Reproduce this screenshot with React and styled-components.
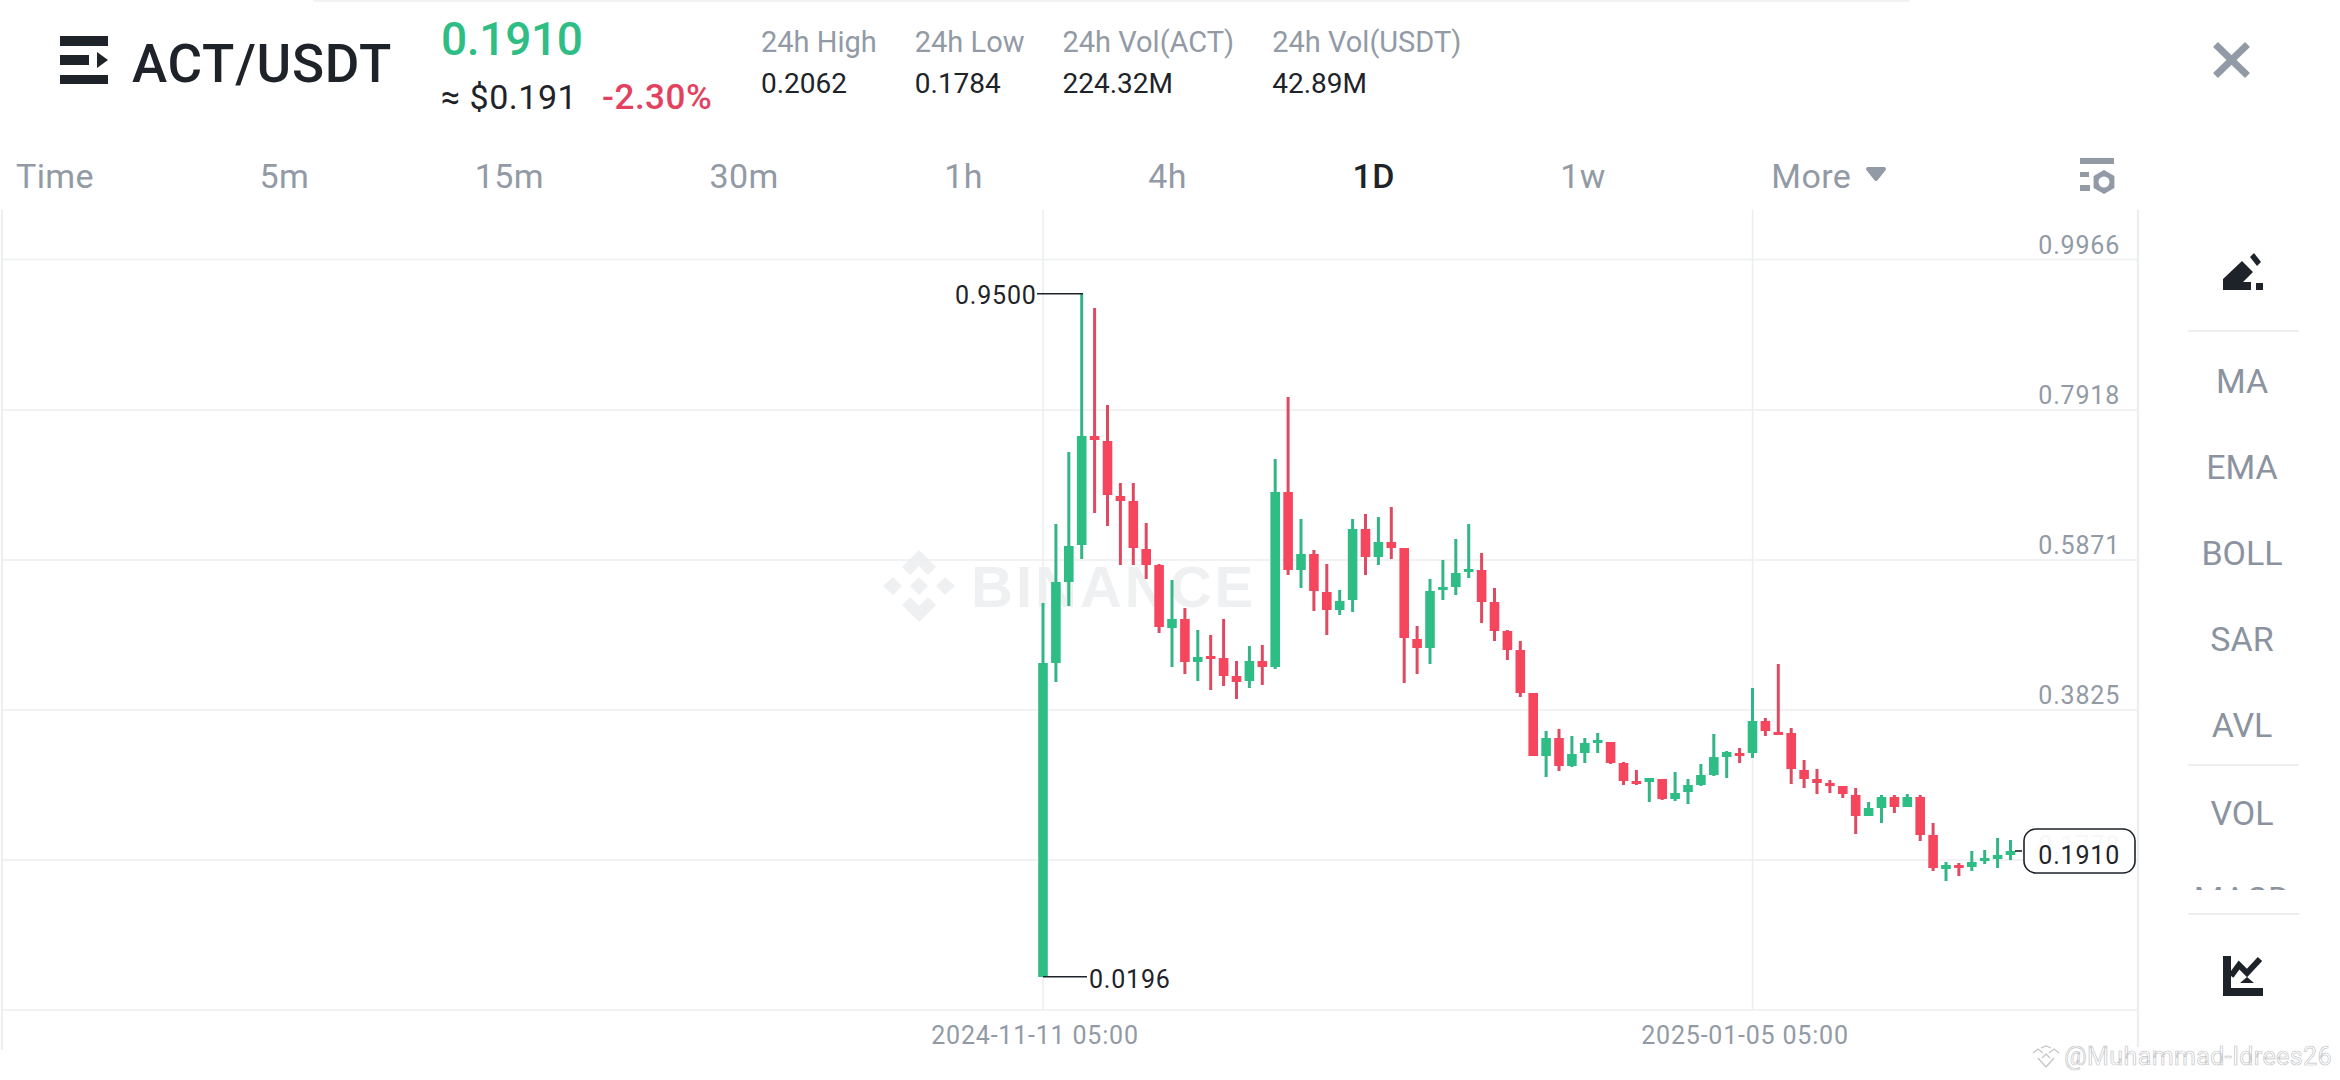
import styled, { createGlobalStyle } from "styled-components";

const GREEN = "#2ebd85";
const RED = "#f6465d";
const DARK = "#1e2329";
const GREY = "#929aa5";
const LINE = "#eceef0";

// [side, high, body top, body bottom, low] in page pixels, one per day
const candles = [
  ["g", 603, 663, 977, 977], ["g", 524, 582, 663, 682], ["g", 452, 546, 582, 606], ["g", 294, 436, 545, 559],
  ["r", 308, 436, 440, 513], ["r", 405, 441, 495, 526], ["r", 483, 496, 501, 565], ["r", 483, 501, 548, 565],
  ["r", 523, 549, 565, 579], ["r", 564, 565, 627, 633], ["g", 580, 619, 628, 667], ["r", 608, 619, 662, 674],
  ["g", 630, 657, 662, 681], ["r", 635, 656, 659, 690], ["r", 619, 658, 676, 686], ["r", 661, 676, 682, 699],
  ["g", 646, 661, 681, 688], ["r", 645, 661, 667, 685], ["g", 459, 492, 667, 669], ["r", 397, 492, 570, 575],
  ["g", 519, 554, 570, 588], ["r", 550, 554, 591, 611], ["r", 564, 592, 610, 635], ["g", 590, 601, 610, 615],
  ["g", 519, 529, 600, 612], ["r", 514, 529, 557, 575], ["g", 517, 542, 557, 565], ["r", 507, 542, 548, 559],
  ["r", 548, 548, 638, 683], ["r", 626, 639, 648, 674], ["g", 579, 591, 648, 664], ["g", 560, 587, 590, 600],
  ["g", 539, 573, 587, 595], ["g", 524, 569, 572, 578], ["r", 553, 570, 602, 623], ["r", 588, 602, 631, 641],
  ["r", 630, 631, 650, 660], ["r", 641, 650, 693, 697], ["r", 693, 693, 756, 756], ["g", 731, 738, 756, 777],
  ["r", 729, 738, 766, 771], ["g", 736, 754, 766, 767], ["g", 738, 743, 753, 763], ["g", 733, 740, 742, 753],
  ["r", 742, 742, 763, 764], ["r", 762, 763, 781, 785], ["r", 770, 781, 784, 785], ["g", 778, 778, 782, 802],
  ["r", 779, 779, 799, 800], ["g", 772, 793, 799, 801], ["g", 779, 785, 792, 804], ["g", 764, 775, 785, 786],
  ["g", 734, 757, 775, 776], ["g", 751, 752, 757, 778], ["r", 748, 753, 755, 763], ["g", 688, 721, 753, 758],
  ["r", 718, 721, 731, 736], ["r", 664, 732, 734, 734], ["r", 728, 733, 769, 784], ["r", 760, 770, 779, 788],
  ["r", 769, 779, 783, 794], ["r", 780, 783, 786, 793], ["r", 786, 786, 794, 798], ["r", 788, 795, 816, 834],
  ["g", 802, 808, 816, 816], ["g", 795, 797, 808, 823], ["r", 795, 797, 807, 813], ["g", 794, 797, 807, 807],
  ["r", 795, 797, 835, 841], ["r", 823, 835, 868, 871], ["g", 862, 865, 869, 881], ["r", 863, 865, 868, 876],
  ["g", 851, 862, 867, 871], ["g", 850, 858, 861, 864], ["g", 838, 855, 859, 868], ["g", 840, 851, 855, 860],
];

const tabs = ["Time", "5m", "15m", "30m", "1h", "4h", "1D", "1w"];
const stats = [
  ["24h High", "0.2062"],
  ["24h Low", "0.1784"],
  ["24h Vol(ACT)", "224.32M"],
  ["24h Vol(USDT)", "42.89M"],
];
const upperIndicators = ["MA", "EMA", "BOLL", "SAR", "AVL"];
const lowerIndicators = ["VOL", "MACD"];
const gridRows = [259.5, 410, 560, 710, 860, 1010];
const priceLabels = [
  ["0.9966", 254],
  ["0.7918", 404],
  ["0.5871", 554],
  ["0.3825", 704],
  ["0.1778", 854],
];

const GlobalStyle = createGlobalStyle`
  html, body {
    margin: 0;
    padding: 0;
    background: #fff;
  }
  body {
    font-family: Roboto, "Liberation Sans", sans-serif;
    color: ${DARK};
  }
`;

const SPage = styled.div`
  position: relative;
  display: flex;
  flex-direction: column;
  width: 2340px;
  height: 1080px;
  overflow: hidden;
  background: #fff;
`;

const STopEdge = styled.div`
  position: absolute;
  top: 0;
  left: 313px;
  width: 1597px;
  height: 2px;
  background: #f1f2f3;
  border-radius: 0 0 8px 8px;
`;

const SHeader = styled.div`
  display: flex;
  align-items: flex-start;
  height: 150px;
  padding-left: 60px;
  box-sizing: border-box;
`;

const SPair = styled.div`
  display: flex;
  align-items: center;
  gap: 24px;
  width: 381px;
  height: 120px;
`;

const SPairName = styled.div`
  font-size: 53px;
  font-weight: 500;
  line-height: 1;
  letter-spacing: 0.75px;
  white-space: nowrap;
  padding-top: 8px;
`;

const SPriceBlock = styled.div`
  display: flex;
  flex-direction: column;
  width: 320px;
  padding-top: 16px;
`;

const SLastPrice = styled.div`
  font-size: 46px;
  font-weight: 500;
  line-height: 46px;
  letter-spacing: -0.3px;
  color: ${GREEN};
`;

const SPriceRow = styled.div`
  display: flex;
  align-items: baseline;
  gap: 25px;
  margin-top: 15px;
  font-size: 34px;
  line-height: 40px;
  white-space: nowrap;
`;

const SUsdPrice = styled.span`
  color: ${DARK};
  letter-spacing: 0.5px;
`;

const SChange = styled.span`
  color: #e2425f;
  font-size: 35px;
  font-weight: 500;
  letter-spacing: 0.5px;
`;

const SStats = styled.div`
  display: flex;
  gap: 38px;
  padding-top: 24px;
`;

const SStat = styled.div`
  display: flex;
  flex-direction: column;
  gap: 8px;
  white-space: nowrap;
`;

const SStatLabel = styled.div`
  font-size: 29px;
  line-height: 36px;
  color: ${GREY};
`;

const SStatValue = styled.div`
  font-size: 28px;
  line-height: 32px;
  color: ${DARK};
`;

const SClose = styled.svg`
  margin: 42px 90px 0 auto;
`;

const SToolbar = styled.div`
  display: flex;
  align-items: center;
  gap: 165.5px;
  height: 60px;
  padding: 0 0 8px 16px;
  box-sizing: border-box;
`;

const STab = styled.div`
  font-size: 34px;
  line-height: 40px;
  letter-spacing: 0.4px;
  font-weight: ${({ $active }) => ($active ? 500 : 400)};
  color: ${({ $active }) => ($active ? DARK : GREY)};
  white-space: nowrap;
`;

const SMore = styled.div`
  display: flex;
  align-items: center;
  gap: 15px;
`;

const SMoreArrow = styled.svg`
  margin-bottom: 4px;
`;

const SSettings = styled.svg`
  margin-left: 28px;
`;

const SMain = styled.div`
  display: flex;
  flex: 1;
  min-height: 0;
`;

const SChart = styled.svg`
  display: block;
  flex: none;
`;

const SAxisText = styled.text`
  font-family: Roboto, "Liberation Sans", sans-serif;
  font-size: 25px;
  letter-spacing: 0.8px;
  fill: ${({ $dark }) => ($dark ? DARK : GREY)};
`;

const SWatermarkText = styled.text`
  font-family: "Liberation Sans", sans-serif;
  font-size: 58px;
  font-weight: 700;
  letter-spacing: 3px;
  fill: #eff0f1;
`;

const SSide = styled.div`
  display: flex;
  flex-direction: column;
  align-items: center;
  flex: 1;
  padding: 42px 0 0 6px;
  box-sizing: border-box;
`;

const SSideIcon = styled.svg`
  flex: none;
  display: block;
`;

const SDivider = styled.div`
  flex: none;
  width: 111px;
  height: 2px;
  margin-top: ${({ $top }) => $top || 0}px;
  margin-bottom: ${({ $bottom }) => $bottom || 0}px;
  background: ${LINE};
`;

const SIndicatorList = styled.div`
  display: flex;
  flex-direction: column;
  align-items: center;
  width: 100%;
  height: 558px;
  padding-top: 6px;
  box-sizing: border-box;
  overflow: hidden;
`;

const SIndicator = styled.div`
  flex: none;
  height: 86px;
  line-height: 86px;
  margin-right: 2px;
  font-size: 34px;
  color: #8b93a0;
`;

const SHandle = styled.div`
  position: absolute;
  right: 0;
  bottom: 8px;
  display: flex;
  align-items: center;
  gap: 4px;
  padding-right: 8px;
`;

const SHandleText = styled.span`
  font-size: 25px;
  line-height: 30px;
  letter-spacing: 0.4px;
  color: #fff;
  -webkit-text-stroke: 0.7px #c4c6c8;
`;

const MenuLogo = () => (
  <svg width="48" height="48" viewBox="0 0 48 48" fill={DARK}>
    <rect x="0" y="0" width="48" height="10" />
    <rect x="0" y="19" width="29" height="10" />
    <polygon points="37,16 48,24 37,32" />
    <rect x="0" y="39" width="48" height="9" />
  </svg>
);

const CloseIcon = () => (
  <SClose width="37" height="36" viewBox="0 0 37 36" stroke={GREY} strokeWidth="7">
    <line x1="2.5" y1="2.5" x2="34.5" y2="33.5" />
    <line x1="34.5" y1="2.5" x2="2.5" y2="33.5" />
  </SClose>
);

const SettingsIcon = () => (
  <SSettings width="35" height="36" viewBox="0 0 35 36" fill={GREY}>
    <rect x="0" y="0" width="34" height="6" />
    <rect x="0" y="14" width="9" height="5" />
    <rect x="0" y="27" width="10" height="6" />
    <path
      fillRule="evenodd"
      d="M24 12l10.4 6v12L24 36l-10.4-6V18zM24 18.5a5.5 5.5 0 1 0 0 11a5.5 5.5 0 1 0 0-11z"
    />
  </SSettings>
);

const PenIcon = () => (
  <SSideIcon width="40" height="38" viewBox="0 0 40 38" fill={DARK}>
    <polygon points="0,38 0,27 19,9 30,20 20,30 28,30 28,38" />
    <polygon points="27,5 31,1 38,10 34,14" />
    <rect x="33" y="31" width="7" height="7" />
  </SSideIcon>
);

const LineChartIcon = () => (
  <SSideIcon width="40" height="40" viewBox="0 0 40 40" fill={DARK}>
    <path d="M0 0h8v32h32v8H0z" />
    <polyline points="8,20 16,9 24,17 37,3" fill="none" stroke={DARK} strokeWidth="6" />
    <polygon points="24,21 31,27 17,27" />
  </SSideIcon>
);

const Candle = ({ index, side, high, top, bottom, low }) => {
  const x = 1043 + index * 12.9;
  const fill = side === "g" ? GREEN : RED;
  return (
    <g>
      <rect x={x - 1.5} y={high} width="3" height={low - high} fill={side === "g" ? "#34b585" : "#de4a62"} />
      <rect x={x - 4.8} y={top} width="9.6" height={Math.max(bottom - top, 3)} fill={fill} />
    </g>
  );
};

const Watermark = () => (
  <g>
    <g fill="#eff0f1" transform="translate(919 586)">
      <polygon points="0,-36 17,-19 9,-11 0,-20 -9,-11 -17,-19" />
      <polygon points="0,36 17,19 9,11 0,20 -9,11 -17,19" />
      <polygon points="-36,0 -26,-9 -17,0 -26,9" />
      <polygon points="36,0 26,-9 17,0 26,9" />
      <polygon points="0,-9 9,0 0,9 -9,0" />
    </g>
    <SWatermarkText x="971" y="607">BINANCE</SWatermarkText>
  </g>
);

const Chart = () => (
  <SChart width="2140" height="870" viewBox="0 210 2140 870">
    <Watermark />
    {gridRows.map((y) => (
      <line key={y} x1="2" x2="2137" y1={y} y2={y} stroke={LINE} strokeWidth="1.6" />
    ))}
    <line x1="2" x2="2" y1="210" y2="1050" stroke={LINE} strokeWidth="2" />
    <line x1="1043" x2="1043" y1="210" y2="1010" stroke={LINE} strokeWidth="1.6" />
    <line x1="1752.6" x2="1752.6" y1="210" y2="1010" stroke={LINE} strokeWidth="1.6" />
    <line x1="2138" x2="2138" y1="210" y2="1047" stroke={LINE} strokeWidth="2.4" />

    {priceLabels.map(([label, y]) => (
      <SAxisText key={label} x="2120" y={y} textAnchor="end">{label}</SAxisText>
    ))}
    <SAxisText x="1035" y="1044" textAnchor="middle">2024-11-11 05:00</SAxisText>
    <SAxisText x="1745" y="1044" textAnchor="middle">2025-01-05 05:00</SAxisText>

    {candles.map(([side, high, top, bottom, low], i) => (
      <Candle key={i} index={i} side={side} high={high} top={top} bottom={bottom} low={low} />
    ))}

    <line x1="1037" x2="1083" y1="293.7" y2="293.7" stroke={DARK} strokeWidth="1.6" />
    <SAxisText $dark x="955" y="304">0.9500</SAxisText>
    <line x1="1043" x2="1087" y1="976.7" y2="976.7" stroke={DARK} strokeWidth="1.6" />
    <SAxisText $dark x="1089" y="988">0.0196</SAxisText>

    <line x1="2015" x2="2022" y1="851" y2="851" stroke={DARK} strokeWidth="1.6" />
    <rect x="2024" y="829" width="111" height="44" rx="12" fill="#fff" fillOpacity="0.92" stroke={DARK} strokeWidth="1.6" />
    <SAxisText $dark x="2120" y="864" textAnchor="end">0.1910</SAxisText>
  </SChart>
);

const App = () => {
  return (
    <SPage>
      <GlobalStyle />
      <STopEdge />
      <SHeader>
        <SPair>
          <MenuLogo />
          <SPairName>ACT/USDT</SPairName>
        </SPair>
        <SPriceBlock>
          <SLastPrice>0.1910</SLastPrice>
          <SPriceRow>
            <SUsdPrice>≈ $0.191</SUsdPrice>
            <SChange>-2.30%</SChange>
          </SPriceRow>
        </SPriceBlock>
        <SStats>
          {stats.map(([label, value]) => (
            <SStat key={label}>
              <SStatLabel>{label}</SStatLabel>
              <SStatValue>{value}</SStatValue>
            </SStat>
          ))}
        </SStats>
        <CloseIcon />
      </SHeader>

      <SToolbar>
        {tabs.map((tab) => (
          <STab key={tab} $active={tab === "1D"}>{tab}</STab>
        ))}
        <SMore>
          <STab>More</STab>
          <SMoreArrow width="20" height="14" viewBox="0 0 20 14" fill={GREY}>
            <path d="M2 0h16a2 2 0 0 1 1.5 3.2l-8 10a2 2 0 0 1-3 0l-8-10A2 2 0 0 1 2 0z" />
          </SMoreArrow>
        </SMore>
        <SettingsIcon />
      </SToolbar>

      <SMain>
        <Chart />
        <SSide>
          <PenIcon />
          <SDivider $top={40} />
          <SIndicatorList>
            {upperIndicators.map((name) => (
              <SIndicator key={name}>{name}</SIndicator>
            ))}
            <SDivider $top={-4} $bottom={4} />
            {lowerIndicators.map((name) => (
              <SIndicator key={name}>{name}</SIndicator>
            ))}
          </SIndicatorList>
          <SDivider $top={23} $bottom={41} />
          <LineChartIcon />
        </SSide>
      </SMain>

      <SHandle>
        <svg width="28" height="24" viewBox="0 0 28 24" fill="none" stroke="#c4c6c8" strokeWidth="1.3">
          <path d="M1 8l5-4 5 4M17 8l5-4 5 4M9 3l5-2 5 2M6 13l8 9 8-9M10 13l4-4 4 4" />
        </svg>
        <SHandleText>@Muhammad-Idrees26</SHandleText>
      </SHandle>
    </SPage>
  );
};

export default App;
